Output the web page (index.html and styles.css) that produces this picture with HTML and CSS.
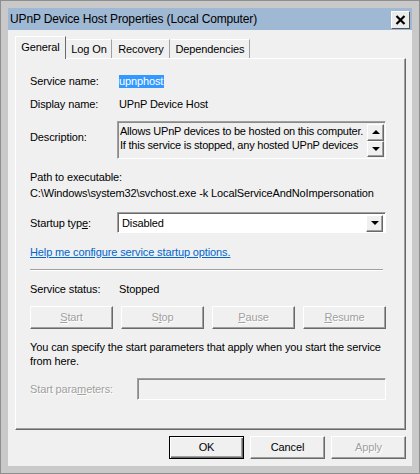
FILE: index.html
```html
<!DOCTYPE html>
<html>
<head>
<meta charset="utf-8">
<link rel="stylesheet" href="styles.css">
</head>
<body>
<div class="window">
  <div class="titlebar">
    <span class="title">UPnP Device Host Properties (Local Computer)</span>
    <span class="close">
      <svg width="11" height="10" viewBox="0 0 11 10"><path d="M1.5 1 L9.5 9 M9.5 1 L1.5 9" stroke="#000" stroke-width="2.2" fill="none"/></svg>
    </span>
  </div>
  <div class="body">
    <div class="tabs">
      <div class="tab active w-general">General</div>
      <div class="tab w-logon">Log On</div>
      <div class="tab w-recovery">Recovery</div>
      <div class="tab w-deps">Dependencies</div>
    </div>
    <div class="panel">
      <div class="row r-name">
        <div class="lbl">Service name:</div>
        <div class="val"><span class="sel">upnphost</span></div>
      </div>
      <div class="row r-disp">
        <div class="lbl">Display name:</div>
        <div class="val">UPnP Device Host</div>
      </div>
      <div class="row r-desc">
        <div class="lbl lbl-desc">Description:</div>
        <div class="descbox">
          <div class="desctext">
            <div class="line">Allows UPnP devices to be hosted on this computer.</div>
            <div class="line">If this service is stopped, any hosted UPnP devices</div>
          </div>
          <div class="vscroll">
            <span class="sbtn"><span class="tri-up"></span></span>
            <span class="sbtn"><span class="tri-down"></span></span>
          </div>
        </div>
      </div>
      <div class="path">
        <div>Path to executable:</div>
        <div>C:\Windows\system32\svchost.exe -k LocalServiceAndNoImpersonation</div>
      </div>
      <div class="row r-startup">
        <div class="lbl">Startup typ<u>e</u>:</div>
        <div class="combo">
          <span class="combo-text">Disabled</span>
          <span class="dd"><span class="tri-down"></span></span>
        </div>
      </div>
      <a class="link" href="#">Help me configure service startup options.</a>
      <div class="sep"></div>
      <div class="row r-status">
        <div class="lbl">Service status:</div>
        <div class="val">Stopped</div>
      </div>
      <div class="svc-btns">
        <span class="btn svc disabled"><u>S</u>tart</span>
        <span class="btn svc disabled">S<u>t</u>op</span>
        <span class="btn svc disabled"><u>P</u>ause</span>
        <span class="btn svc disabled"><u>R</u>esume</span>
      </div>
      <p class="note">You can specify the start parameters that apply when you start the service<br>from here.</p>
      <div class="row r-params">
        <div class="lbl lbl-params disabled">Start para<u>m</u>eters:</div>
        <div class="input"></div>
      </div>
    </div>
    <div class="footer">
      <span class="btn dlg default">OK</span>
      <span class="btn dlg">Cancel</span>
      <span class="btn dlg disabled">Apply</span>
    </div>
  </div>
</div>
</body>
</html>
```

FILE: styles.css
```css
html, body {
  margin: 0;
  padding: 0;
}
body {
  font-family: "Liberation Sans", Arial, sans-serif;
  font-size: 11px;
  letter-spacing: -0.12px;
  color: #000;
}
.window {
  width: 420px;
  height: 474px;
  box-sizing: border-box;
  border: 1px solid #8e8e8e;
  background: #c9c9c9;
  padding: 7px;
  display: flex;
  flex-direction: column;
}
.titlebar {
  height: 22px;
  flex: none;
  background: #9fb8d3;
  display: flex;
  align-items: center;
  padding: 0 2px 0 2px;
}
.title {
  font-size: 12px;
  letter-spacing: -0.14px;
  color: #000;
  white-space: nowrap;
}
.close {
  margin-left: auto;
  width: 19px;
  height: 18px;
  box-sizing: border-box;
  border: 1px solid;
  border-color: #fff #555 #555 #fff;
  background: #ececec;
  display: flex;
  align-items: center;
  justify-content: center;
  margin-top: 1px;
}
.body {
  flex: 1;
  background: #f0f0f0;
  padding-top: 6px;
  display: flex;
  flex-direction: column;
}
.tabs {
  height: 22px;
  display: flex;
  align-items: flex-end;
  padding-left: 7px;
  position: relative;
  z-index: 1;
}
.tab {
  box-sizing: border-box;
  height: 19px;
  border: 1px solid;
  border-bottom: none;
  border-color: #fff #a0a0a0 transparent #f0f0f0;
  text-align: center;
  line-height: 18px;
  background: #f0f0f0;
}
.tab.active {
  height: 23px;
  margin-bottom: -1px;
  border-color: #fff #696969 transparent #fff;
  line-height: 20px;
}
.w-general { width: 51px; }
.w-logon { width: 46px; }
.w-recovery { width: 58px; }
.w-deps { width: 80px; }

.panel {
  width: 391px;
  height: 372px;
  box-sizing: border-box;
  margin-left: 7px;
  border: 1px solid;
  border-color: #fff #696969 #696969 #fff;
  box-shadow: inset -1px -1px #a0a0a0;
  padding: 0 19px 0 14px;
}
.row {
  display: flex;
  align-items: center;
}
.lbl {
  width: 87px;
  flex: none;
  line-height: 14px;
  white-space: nowrap;
}
.val {
  padding-left: 2px;
  line-height: 14px;
  white-space: nowrap;
}
.sel {
  background: #3399ff;
  color: #fff;
  padding: 0 1px 0 0;
  display: inline-block;
  line-height: 13px;
}
.r-name { margin-top: 15px; height: 14px; }
.r-disp { margin-top: 9px; height: 14px; }
.r-desc { margin-top: 10px; align-items: flex-start; }
.lbl-desc { padding-top: 9px; }
.descbox {
  width: 269px;
  height: 38px;
  box-sizing: border-box;
  border: 1px solid;
  border-color: #a0a0a0 #fff #fff #a0a0a0;
  box-shadow: inset 1px 1px #8a8a8a;
  display: flex;
  background: #f0f0f0;
}
.desctext {
  flex: 1;
  overflow: hidden;
  padding: 2px 0 0 2px;
  line-height: 14px;
  letter-spacing: -0.22px;
}
.line { white-space: nowrap; }
.vscroll {
  width: 17px;
  display: flex;
  flex-direction: column;
  padding: 2px 1px 1px 0;
}
.sbtn {
  flex: 1;
  box-sizing: border-box;
  border: 1px solid;
  border-color: #fff #696969 #696969 #fff;
  box-shadow: inset -1px -1px #a0a0a0;
  background: #f0f0f0;
  display: flex;
  align-items: center;
  justify-content: center;
}
.tri-up {
  width: 0;
  height: 0;
  border-left: 4px solid transparent;
  border-right: 4px solid transparent;
  border-bottom: 4px solid #000;
}
.tri-down {
  width: 0;
  height: 0;
  border-left: 4px solid transparent;
  border-right: 4px solid transparent;
  border-top: 4px solid #000;
}
.path {
  margin-top: 10px;
  line-height: 16px;
  white-space: nowrap;
}
.r-startup { margin-top: 11px; }
.combo {
  width: 269px;
  height: 21px;
  box-sizing: border-box;
  border: 1px solid;
  border-color: #a0a0a0 #fff #fff #a0a0a0;
  box-shadow: inset 1px 1px #696969;
  background: #fff;
  display: flex;
  align-items: center;
  padding: 2px 2px 1px 4px;
}
.combo-text { flex: 1; }
.dd {
  width: 17px;
  height: 17px;
  box-sizing: border-box;
  border: 1px solid;
  border-color: #fff #696969 #696969 #fff;
  box-shadow: inset -1px -1px #a0a0a0;
  background: #f0f0f0;
  display: flex;
  align-items: center;
  justify-content: center;
}
.link {
  display: block;
  margin-top: 12px;
  line-height: 14px;
  color: #0066cc;
  text-decoration: underline;
}
.sep {
  margin-top: 10px;
  width: 353px;
  height: 1px;
  background: #a0a0a0;
  border-bottom: 1px solid #fff;
}
.r-status { margin-top: 11px; height: 14px; }
.svc-btns {
  margin-top: 10px;
  display: flex;
  justify-content: space-between;
}
.btn {
  display: block;
  box-sizing: border-box;
  height: 23px;
  line-height: 21px;
  text-align: center;
  background: #f0f0f0;
  border: 1px solid;
  border-color: #fff #696969 #696969 #fff;
  box-shadow: inset -1px -1px #a0a0a0;
}
.svc { width: 83px; }
.disabled {
  color: #a0a0a0;
  text-shadow: 1px 1px #fff;
}
.note {
  margin: 11px 0 0 0;
  line-height: 14px;
  white-space: nowrap;
}
.r-params { margin-top: 10px; }
.lbl-params { width: 107px; }
.input {
  width: 249px;
  height: 22px;
  box-sizing: border-box;
  border: 1px solid;
  border-color: #a0a0a0 #fff #fff #a0a0a0;
  box-shadow: inset 1px 1px #8a8a8a;
  background: #f0f0f0;
}
.footer {
  margin-top: 6px;
  display: flex;
  justify-content: flex-end;
  gap: 6px;
  padding-right: 6px;
}
.dlg { width: 75px; }
.default {
  border-color: #000;
  box-shadow: inset 1px 1px #fff, inset -1px -1px #696969, inset -2px -2px #a0a0a0;
}
```
